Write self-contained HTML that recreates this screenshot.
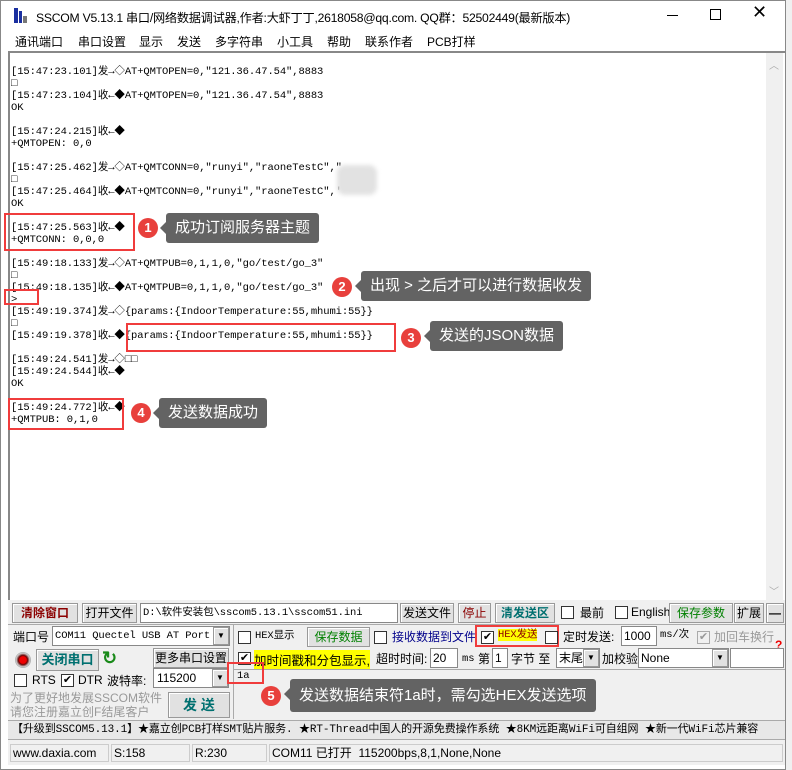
<!DOCTYPE html>
<html><head><meta charset="utf-8"><style>
*{margin:0;padding:0;box-sizing:border-box}
body{width:792px;height:770px;background:#f0f0f0;position:relative;overflow:hidden;font-family:"Liberation Sans","Microsoft YaHei","Noto Sans CJK SC",sans-serif;font-size:12px;color:#000}
.a{position:absolute;white-space:nowrap}
.mono{font-family:"Liberation Mono","Noto Sans CJK SC",monospace;font-size:10.5px;line-height:12px;letter-spacing:-0.1px}
.red{position:absolute;border:2px solid #f03c3c}
.num{position:absolute;width:20px;height:20px;border-radius:50%;background:#e8403c;color:#fff;font-size:13px;text-align:center;line-height:20px;font-weight:bold}
.tip{position:absolute;background:#636363;color:#fff;border-radius:3px;font-size:15px;height:30px;line-height:30px;padding:0 9px;white-space:nowrap}
.tip:before{content:"";position:absolute;left:-6px;top:9px;border:6px solid transparent;border-left:0;border-right-color:#636363}
.btn{position:absolute;background:#e1e1e1;border:1px solid #999;box-shadow:inset 1px 1px #fff;text-align:center;white-space:nowrap}
.inp{position:absolute;background:#fff;border:1px solid #888;white-space:nowrap;overflow:hidden}
.cb{position:absolute;width:13px;height:13px;background:#fff;border:1px solid #333;font-size:11px;line-height:11px;text-align:center}
.m{position:absolute;top:33px;font-size:12px}
</style></head><body>
<div class="a" style="left:0;top:0;width:786px;height:770px;background:#fff;border:1px solid #888"></div>
<div class="a" style="left:14px;top:8px;width:4px;height:15px;background:#1a2fa0"></div>
<div class="a" style="left:19px;top:11px;width:3px;height:12px;background:#1a2fa0"></div>
<div class="a" style="left:23px;top:16px;width:4px;height:7px;background:#777"></div>
<div class="a" style="left:36px;top:8px;font-size:12.2px;letter-spacing:-0.25px">SSCOM V5.13.1 串口/网络数据调试器,作者:大虾丁丁,2618058@qq.com. QQ群：52502449(最新版本)</div>
<div class="a" style="left:667px;top:15px;width:11px;height:1px;background:#000"></div>
<div class="a" style="left:710px;top:9px;width:11px;height:11px;border:1px solid #000"></div>
<div class="a" style="left:752px;top:2px;font-size:18px;font-weight:100">✕</div>
<div class="m" style="left:15px">通讯端口</div>
<div class="m" style="left:78px">串口设置</div>
<div class="m" style="left:139px">显示</div>
<div class="m" style="left:177px">发送</div>
<div class="m" style="left:215px">多字符串</div>
<div class="m" style="left:277px">小工具</div>
<div class="m" style="left:327px">帮助</div>
<div class="m" style="left:365px">联系作者</div>
<div class="m" style="left:427px">PCB打样</div>
<div class="a" style="left:8px;top:51px;width:777px;height:549px;border-top:2px solid #888;border-left:2px solid #888;background:#fff"></div>
<div class="a" style="left:766px;top:53px;width:17px;height:547px;background:#f0f0f0"></div>
<div class="a" style="left:769px;top:57px;font-size:10px;color:#aaa">︿</div>
<div class="a" style="left:769px;top:583px;font-size:10px;color:#aaa">﹀</div>
<div class="a mono" style="left:11px;top:66px">[15:47:23.101]发→◇AT+QMTOPEN=0,"121.36.47.54",8883<br>□<br>[15:47:23.104]收←◆AT+QMTOPEN=0,"121.36.47.54",8883<br>OK<br><br>[15:47:24.215]收←◆<br>+QMTOPEN: 0,0<br><br>[15:47:25.462]发→◇AT+QMTCONN=0,"runyi","raoneTestC","<br>□<br>[15:47:25.464]收←◆AT+QMTCONN=0,"runyi","raoneTestC",'<br>OK<br><br>[15:47:25.563]收←◆<br>+QMTCONN: 0,0,0<br><br>[15:49:18.133]发→◇AT+QMTPUB=0,1,1,0,"go/test/go_3"<br>□<br>[15:49:18.135]收←◆AT+QMTPUB=0,1,1,0,"go/test/go_3"<br>&gt;<br>[15:49:19.374]发→◇{params:{IndoorTemperature:55,mhumi:55}}<br>□<br>[15:49:19.378]收←◆{params:{IndoorTemperature:55,mhumi:55}}<br><br>[15:49:24.541]发→◇□□<br>[15:49:24.544]收←◆<br>OK<br><br>[15:49:24.772]收←◆<br>+QMTPUB: 0,1,0</div>
<div class="a" style="left:337px;top:165px;width:40px;height:30px;background:#e2e2e2;border-radius:8px;filter:blur(2px)"></div>
<div class="red" style="left:4px;top:213px;width:131px;height:38px"></div>
<div class="num" style="left:138px;top:218px">1</div>
<div class="tip" style="left:166px;top:213px">成功订阅服务器主题</div>
<div class="red" style="left:4px;top:289px;width:35px;height:16px"></div>
<div class="num" style="left:332px;top:277px">2</div>
<div class="tip" style="left:361px;top:271px">出现 &gt; 之后才可以进行数据收发</div>
<div class="red" style="left:126px;top:323px;width:270px;height:29px"></div>
<div class="num" style="left:401px;top:328px">3</div>
<div class="tip" style="left:430px;top:321px">发送的JSON数据</div>
<div class="red" style="left:8px;top:398px;width:116px;height:32px"></div>
<div class="num" style="left:131px;top:403px">4</div>
<div class="tip" style="left:159px;top:398px">发送数据成功</div>
<div class="a" style="left:8px;top:600px;width:777px;height:165px;background:#f0f0f0"></div>
<div class="btn" style="left:12px;top:603px;width:66px;height:20px;color:#8b0000;font-weight:bold;line-height:18px">清除窗口</div>
<div class="btn" style="left:82px;top:603px;width:55px;height:20px;line-height:18px">打开文件</div>
<div class="inp mono" style="left:140px;top:603px;width:258px;height:20px;line-height:18px;padding-left:2px">D:\软件安装包\sscom5.13.1\sscom51.ini</div>
<div class="btn" style="left:400px;top:603px;width:54px;height:20px;line-height:18px">发送文件</div>
<div class="btn" style="left:458px;top:603px;width:33px;height:20px;line-height:18px;color:#8b0000">停止</div>
<div class="btn" style="left:495px;top:603px;width:60px;height:20px;line-height:18px;color:#007070;font-weight:bold">清发送区</div>
<div class="cb" style="left:561px;top:606px"></div><div class="a" style="left:580px;top:604px">最前</div>
<div class="cb" style="left:615px;top:606px"></div><div class="a" style="left:631px;top:605px">English</div>
<div class="btn" style="left:669px;top:603px;width:64px;height:20px;line-height:18px;color:#008000">保存参数</div>
<div class="btn" style="left:734px;top:603px;width:30px;height:20px;line-height:18px">扩展</div>
<div class="btn" style="left:766px;top:603px;width:18px;height:20px;line-height:18px;font-weight:bold">—</div>
<div class="a" style="left:8px;top:624px;width:777px;height:1px;background:#aaa"></div>
<div class="a" style="left:13px;top:628px">端口号</div>
<div class="inp mono" style="left:52px;top:626px;width:178px;height:20px;line-height:18px;padding-left:2px">COM11 Quectel USB AT Port</div>
<div class="btn" style="left:213px;top:627px;width:16px;height:18px;font-size:8px;line-height:16px">▼</div>
<div class="a" style="left:233px;top:624px;width:1px;height:95px;background:#aaa"></div>
<div class="cb" style="left:238px;top:631px"></div><div class="a mono" style="left:255px;top:630px">HEX显示</div>
<div class="btn" style="left:307px;top:627px;width:63px;height:20px;line-height:18px;color:#008000">保存数据</div>
<div class="cb" style="left:374px;top:631px"></div><div class="a" style="left:392px;top:628px;color:#00008b">接收数据到文件</div>
<div class="red" style="left:475px;top:625px;width:84px;height:22px"></div>
<div class="cb" style="left:481px;top:631px">✔</div><div class="a mono" style="left:498px;top:629px;background:#ffff00;color:#8b0000">HEX发送</div>
<div class="cb" style="left:545px;top:631px"></div><div class="a" style="left:563px;top:628px">定时发送:</div>
<div class="inp" style="left:621px;top:626px;width:36px;height:20px;line-height:18px;padding-left:2px">1000</div>
<div class="a mono" style="left:660px;top:629px">ms/次</div>
<div class="cb" style="left:697px;top:631px;border-color:#aaa;color:#999;background:#f0f0f0">✔</div><div class="a" style="left:714px;top:628px;color:#999">加回车换行</div>
<div class="a" style="left:775px;top:638px;color:#e00;font-weight:bold;font-size:12px">?</div>
<div class="a" style="left:15px;top:652px;width:16px;height:16px;border-radius:50%;background:radial-gradient(#e00 30%,#600 40%,#ccc 60%,#888 80%)"></div>
<div class="btn" style="left:36px;top:649px;width:63px;height:22px;line-height:20px;color:#007070;font-weight:bold;font-size:13px">关闭串口</div>
<div class="a" style="left:102px;top:648px;color:#1a8a1a;font-size:18px;font-weight:bold">↻</div>
<div class="btn" style="left:153px;top:648px;width:76px;height:20px;line-height:18px">更多串口设置</div>
<div class="cb" style="left:238px;top:652px">✔</div><div class="a" style="left:254px;top:650px;background:#ffff00;font-size:12.5px">加时间戳和分包显示,</div>
<div class="a" style="left:376px;top:650px">超时时间:</div>
<div class="inp" style="left:430px;top:648px;width:28px;height:20px;line-height:18px;padding-left:2px">20</div>
<div class="a mono" style="left:462px;top:653px">ms</div>
<div class="a" style="left:478px;top:650px">第</div>
<div class="inp" style="left:492px;top:648px;width:16px;height:20px;line-height:18px;padding-left:2px">1</div>
<div class="a" style="left:511px;top:650px">字节 至</div>
<div class="inp" style="left:556px;top:648px;width:44px;height:20px;line-height:18px;padding-left:2px">末尾</div>
<div class="btn" style="left:583px;top:649px;width:16px;height:18px;font-size:8px;line-height:16px">▼</div>
<div class="a" style="left:602px;top:650px">加校验</div>
<div class="inp" style="left:638px;top:648px;width:91px;height:20px;line-height:18px;padding-left:2px">None</div>
<div class="btn" style="left:712px;top:649px;width:16px;height:18px;font-size:8px;line-height:16px">▼</div>
<div class="inp" style="left:730px;top:648px;width:54px;height:20px"></div>
<div class="a" style="left:234px;top:669px;width:551px;height:1px;background:#aaa"></div>
<div class="cb" style="left:14px;top:674px"></div><div class="a" style="left:32px;top:673px">RTS</div>
<div class="cb" style="left:61px;top:674px">✔</div><div class="a" style="left:78px;top:673px">DTR</div>
<div class="a" style="left:107px;top:672px">波特率:</div>
<div class="inp" style="left:153px;top:668px;width:76px;height:20px;line-height:18px;padding-left:3px">115200</div>
<div class="btn" style="left:212px;top:669px;width:16px;height:18px;font-size:8px;line-height:16px">▼</div>
<div class="a" style="left:10px;top:691px;color:#999;line-height:14px;font-size:12px">为了更好地发展SSCOM软件<br>请您注册嘉立创F结尾客户</div>
<div class="btn" style="left:168px;top:692px;width:62px;height:26px;line-height:24px;color:#007070;font-weight:bold;font-size:14px">发 送</div>
<div class="red" style="left:227px;top:662px;width:37px;height:22px"></div>
<div class="a mono" style="left:237px;top:670px">1a</div>
<div class="num" style="left:261px;top:686px">5</div>
<div class="tip" style="left:290px;top:679px;height:33px;line-height:33px">发送数据结束符1a时，需勾选HEX发送选项</div>
<div class="a" style="left:766px;top:670px;width:17px;height:50px;background:#f0f0f0"></div>
<div class="a" style="left:8px;top:720px;width:777px;height:20px;background:#e8e8e8;border-top:1px solid #aaa;border-bottom:1px solid #aaa"></div>
<div class="a mono" style="left:12px;top:724px;font-size:11px">【升级到SSCOM5.13.1】★嘉立创PCB打样SMT贴片服务. ★RT-Thread中国人的开源免费操作系统 ★8KM远距离WiFi可自组网 ★新一代WiFi芯片兼容</div>
<div class="a" style="left:8px;top:742px;width:777px;height:22px;background:#f0f0f0"></div>
<div class="a" style="left:10px;top:744px;width:99px;height:18px;border:1px solid #ccc;padding-left:2px;line-height:16px">www.daxia.com</div>
<div class="a" style="left:111px;top:744px;width:79px;height:18px;border:1px solid #ccc;padding-left:2px;line-height:16px">S:158</div>
<div class="a" style="left:192px;top:744px;width:75px;height:18px;border:1px solid #ccc;padding-left:2px;line-height:16px">R:230</div>
<div class="a" style="left:269px;top:744px;width:514px;height:18px;border:1px solid #ccc;padding-left:2px;line-height:16px">COM11 已打开&nbsp; 115200bps,8,1,None,None</div>
</body></html>
